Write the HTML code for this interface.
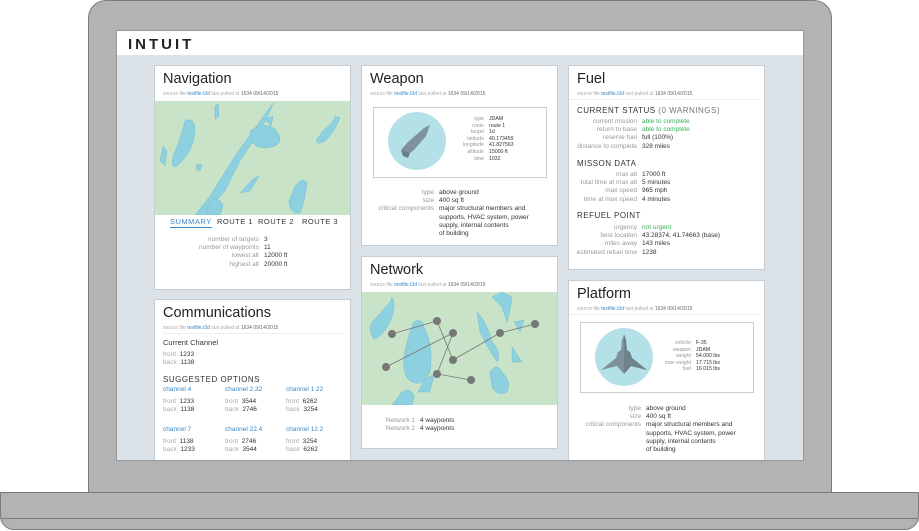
<!DOCTYPE html><html><head><style>
*{margin:0;padding:0;box-sizing:border-box}
body{width:919px;height:531px;background:#fff;position:relative;overflow:hidden;font-family:"Liberation Sans",sans-serif;color:#333}
.a{position:absolute}
.lap{left:88px;top:0;width:744px;height:496px;background:#b3b3b3;border:1px solid #7a7a7a;border-radius:18px 18px 0 0}
.base{left:0;top:492px;width:919px;height:38px;background:#b3b3b3;border:1px solid #7a7a7a;border-radius:0 0 14px 14px}
.scr{left:116px;top:30px;width:688px;height:431px;background:#dbe3e9;border:1px solid #999;overflow:hidden}
.hd{left:0;top:0;width:688px;height:24px;background:#fff}
.logo{left:11px;top:5px;font-size:15px;font-weight:bold;letter-spacing:3px;color:#222}
.c{background:#fff;border:1px solid #c5ccd2;overflow:hidden}
.t{position:absolute;left:8px;top:5px;font-size:14.5px;color:#222}
.s{position:absolute;left:8px;top:25px;font-size:5px;color:#aaa;white-space:nowrap}
.s b{color:#3b87c8;font-weight:normal}.s i{font-style:normal;color:#666}
.kv{position:absolute;font-size:6.5px;line-height:8.2px;white-space:nowrap}
.kv .k{display:inline-block;text-align:right;color:#999;margin-right:5px}
.g{color:#3cad5c}
.h{position:absolute;font-size:8px;letter-spacing:.5px;color:#333}
.bl{color:#3b87c8}
.gr{color:#aaa}
.tab{position:absolute;top:151px;font-size:7.5px;letter-spacing:.5px;white-space:nowrap}
</style></head><body>
<div class="a lap"></div>
<div class="a base"><div class="a" style="left:0;top:25px;width:917px;border-top:1px solid #7a7a7a"></div></div>
<div class="a scr">
<div class="a hd"><div class="a logo">INTUIT</div></div>

<!-- Navigation -->
<div class="a c" style="left:37px;top:34px;width:197px;height:225px">
<div class="t">Navigation</div><div class="s">source file <b>testfile.t3d</b> last pulled at <i>1634 09/14/2015</i></div>
<svg class="a" style="left:0;top:35px" width="197" height="114"><rect width="197" height="114" fill="#c8e3c8"/>
<g fill="#8dd0e0" stroke="#6bb8cc" stroke-width=".4">
<path d="M30 20 Q40 15 40 30 Q38 50 25 62 Q15 72 18 55 Q25 40 30 20Z"/>
<path d="M60 5 L63 3 L64 15 L60 18Z"/>
<path d="M115 10 L118 2 L80 55 L55 95 L40 114 L48 114 L70 90 L85 60 L105 30Z"/>
<path d="M95 30 Q110 20 120 28 Q130 40 120 45 Q105 50 98 42Z"/>
<path d="M110 18 L118 15 L116 25Z"/>
<path d="M168 30 Q180 20 180 15 L185 17 Q180 30 170 40 Q160 45 162 38Z"/>
<path d="M140 85 Q148 75 152 82 Q150 100 145 112 Q135 114 134 100Z"/>
<path d="M8 45 L12 50 L10 65 L5 60Z"/>
<path d="M98 78 L104 75 L95 90 L85 92Z"/>
<path d="M55 100 Q65 95 68 105 L65 114 L50 114Z"/>
<path d="M42 63 L47 64 L45 70 L41 68Z"/>
</g></svg>
<div class="tab bl" style="left:15px;border-bottom:1px solid #3b87c8;padding-bottom:1px">SUMMARY</div>
<div class="tab" style="left:62px">ROUTE 1</div>
<div class="tab" style="left:103px">ROUTE 2</div>
<div class="tab" style="left:147px">ROUTE 3</div>
<div class="kv" style="left:0;top:170px"><span class="k" style="width:104px">number of targets</span>3<br><span class="k" style="width:104px">number of waypoints</span>11<br><span class="k" style="width:104px">lowest alt</span>12000 ft<br><span class="k" style="width:104px">highest alt</span>20000 ft</div>
</div>

<!-- Communications -->
<div class="a c" style="left:37px;top:268px;width:197px;height:170px">
<div class="t">Communications</div><div class="s">source file <b>testfile.t3d</b> last pulled at <i>1634 09/14/2015</i></div>
<div class="a" style="left:8px;top:33px;width:180px;border-top:1px solid #eee"></div>
<div class="a" style="left:8px;top:38px;font-size:7.5px">Current Channel</div>
<div class="kv" style="left:8px;top:51px"><span class="gr">front</span>&nbsp; 1233<br><span class="gr">back</span>&nbsp; 1138</div>
<div class="h" style="left:8px;top:75px">SUGGESTED OPTIONS</div>
<div class="kv" style="left:8px;top:86px"><span class="bl">channel 4</span></div>
<div class="kv" style="left:8px;top:98px"><span class="gr">front</span>&nbsp; 1233<br><span class="gr">back</span>&nbsp; 1138</div>
<div class="kv" style="left:8px;top:126px"><span class="bl">channel 7</span></div>
<div class="kv" style="left:8px;top:138px"><span class="gr">front</span>&nbsp; 1138<br><span class="gr">back</span>&nbsp; 1233</div>
<div class="kv" style="left:70px;top:86px"><span class="bl">channel 2.32</span></div>
<div class="kv" style="left:70px;top:98px"><span class="gr">front</span>&nbsp; 3544<br><span class="gr">back</span>&nbsp; 2746</div>
<div class="kv" style="left:70px;top:126px"><span class="bl">channel 22.4</span></div>
<div class="kv" style="left:70px;top:138px"><span class="gr">front</span>&nbsp; 2746<br><span class="gr">back</span>&nbsp; 3544</div>
<div class="kv" style="left:131px;top:86px"><span class="bl">channel 1.22</span></div>
<div class="kv" style="left:131px;top:98px"><span class="gr">front</span>&nbsp; 6262<br><span class="gr">back</span>&nbsp; 3254</div>
<div class="kv" style="left:131px;top:126px"><span class="bl">channel 12.2</span></div>
<div class="kv" style="left:131px;top:138px"><span class="gr">front</span>&nbsp; 3254<br><span class="gr">back</span>&nbsp; 6262</div>
</div>

<!-- Weapon -->
<div class="a c" style="left:244px;top:34px;width:197px;height:181px">
<div class="t">Weapon</div><div class="s">source file <b>testfile.t3d</b> last pulled at <i>1634 09/14/2015</i></div>
<div class="a" style="left:11px;top:41px;width:174px;height:71px;border:1px solid #ccc"></div>
<svg class="a" style="left:26px;top:46px" width="58" height="58"><circle cx="29" cy="29" r="29" fill="#b4e0e8"/>
<path d="M42 13 L38 24 L26 38 L22 41 L15 40 L13 38 L20 30 L36 16Z" fill="#7f929b"/><path d="M13 38 L15 44 L20 46 L22 41Z" fill="#6b7d86"/></svg>
<div class="kv" style="left:60px;top:50px;font-size:5.2px;line-height:6.6px"><span class="k" style="width:62px">type</span>JDAM<br><span class="k" style="width:62px">route</span>route 1<br><span class="k" style="width:62px">target</span>1d<br><span class="k" style="width:62px">latitude</span>40.173459<br><span class="k" style="width:62px">longitude</span>41.827563<br><span class="k" style="width:62px">altitude</span>15000 ft<br><span class="k" style="width:62px">time</span>1032</div>
<div class="kv" style="left:0;top:123px"><span class="k" style="width:72px">type</span>above ground<br><span class="k" style="width:72px">size</span>400 sq ft<br><span class="k" style="width:72px">critical components</span>major structural members and<br><span class="k" style="width:72px"></span>supports, HVAC system, power<br><span class="k" style="width:72px"></span>supply, internal contents<br><span class="k" style="width:72px"></span>of building</div>
</div>

<!-- Network -->
<div class="a c" style="left:244px;top:225px;width:197px;height:193px">
<div class="t">Network</div><div class="s">source file <b>testfile.t3d</b> last pulled at <i>1634 09/14/2015</i></div>
<svg class="a" style="left:0;top:35px" width="197" height="113"><rect width="197" height="113" fill="#c8e3c8"/>
<g fill="#8dd0e0" stroke="#6bb8cc" stroke-width=".4">
<path d="M10 30 Q20 20 28 10 L30 5 Q35 12 28 30 Q20 45 12 47 Q6 40 10 30Z"/>
<path d="M52 30 Q60 25 62 35 Q72 55 68 80 Q60 95 50 90 Q40 85 42 65 Q45 45 52 30Z"/>
<path d="M62 88 L72 82 L68 100 L56 100Z"/>
<path d="M40 100 Q50 95 52 105 L50 113 L30 113Z"/>
<path d="M130 5 L140 0 L150 5 Q148 20 145 30 L140 15Z"/>
<path d="M115 20 Q125 30 130 50 Q140 60 135 70 Q125 55 118 40Z"/>
<path d="M152 30 L162 28 L158 40 L155 35Z"/>
<path d="M128 80 Q135 70 140 80 Q150 90 145 100 Q135 105 130 95Z"/>
<path d="M150 55 L160 70 L150 70Z"/>
</g>
<g stroke="#777" stroke-width=".8" fill="none"><path d="M30 42 L75 29 L91 68 L138 41 L173 32 M24 75 L91 41 L75 82 L109 88"/></g>
<g fill="#777"><circle cx="30" cy="42" r="4"/><circle cx="75" cy="29" r="4"/><circle cx="91" cy="41" r="4"/><circle cx="91" cy="68" r="4"/><circle cx="24" cy="75" r="4"/><circle cx="75" cy="82" r="4"/><circle cx="109" cy="88" r="4"/><circle cx="138" cy="41" r="4"/><circle cx="173" cy="32" r="4"/></g></svg>
<div class="kv" style="left:0;top:160px"><span class="k" style="width:53px">Network 1</span>4 waypoints<br><span class="k" style="width:53px">Network 2</span>4 waypoints</div>
</div>

<!-- Fuel -->
<div class="a c" style="left:451px;top:34px;width:197px;height:205px">
<div class="t">Fuel</div><div class="s">source file <b>testfile.t3d</b> last pulled at <i>1634 09/14/2015</i></div>
<div class="a" style="left:0;top:33px;width:190px;border-top:1px solid #eee"></div>
<div class="h" style="left:8px;top:40px">CURRENT STATUS <span style="color:#777">(0 WARNINGS)</span></div>
<div class="kv" style="left:0;top:52px"><span class="k" style="width:68px">current mission</span><span class="g">able to complete</span><br><span class="k" style="width:68px">return to base</span><span class="g">able to complete</span><br><span class="k" style="width:68px">reserve fuel</span>full (100%)<br><span class="k" style="width:68px">distance to complete</span>328 miles</div>
<div class="h" style="left:8px;top:93px">MISSON DATA</div>
<div class="kv" style="left:0;top:105px"><span class="k" style="width:68px">max alt</span>17000 ft<br><span class="k" style="width:68px">total time at max alt</span>5 minutes<br><span class="k" style="width:68px">max speed</span>965 mph<br><span class="k" style="width:68px">time at max speed</span>4 minutes</div>
<div class="h" style="left:8px;top:145px">REFUEL POINT</div>
<div class="kv" style="left:0;top:158px"><span class="k" style="width:68px">urgency</span><span class="g">not urgent</span><br><span class="k" style="width:68px">best location</span>43.28374, 41.74663 (base)<br><span class="k" style="width:68px">miles away</span>143 miles<br><span class="k" style="width:68px">estimated refuel time</span>1238</div>
</div>

<!-- Platform -->
<div class="a c" style="left:451px;top:249px;width:197px;height:190px">
<div class="t">Platform</div><div class="s">source file <b>testfile.t3d</b> last pulled at <i>1634 09/14/2015</i></div>
<div class="a" style="left:0;top:33px;width:190px;border-top:1px solid #eee"></div>
<div class="a" style="left:11px;top:41px;width:174px;height:71px;border:1px solid #ccc"></div>
<svg class="a" style="left:26px;top:47px" width="58" height="58"><circle cx="29" cy="29" r="29" fill="#b4e0e8"/>
<path d="M29 6 L31 12 L32 22 L35 24 L37 30 L52 42 L36 38 L29 46 L22 38 L6 42 L21 30 L23 24 L26 22 L27 12Z" fill="#7f929b"/><path d="M29 6 L31 12 L32 22 L35 24 L37 30 L52 42 L36 38 L29 46Z" fill="#6e828b"/></svg>
<div class="kv" style="left:60px;top:59px;font-size:5.2px;line-height:6.6px"><span class="k" style="width:62px">vehicle</span>F-35<br><span class="k" style="width:62px">weapon</span>JDAM<br><span class="k" style="width:62px">weight</span>54.000 lbs<br><span class="k" style="width:62px">max weight</span>17.715 lbs<br><span class="k" style="width:62px">fuel</span>16.015 lbs</div>
<div class="kv" style="left:0;top:124px"><span class="k" style="width:72px">type</span>above ground<br><span class="k" style="width:72px">size</span>400 sq ft<br><span class="k" style="width:72px">critical components</span>major structural members and<br><span class="k" style="width:72px"></span>supports, HVAC system, power<br><span class="k" style="width:72px"></span>supply, internal contents<br><span class="k" style="width:72px"></span>of building</div>
</div>
</div>
</body></html>
